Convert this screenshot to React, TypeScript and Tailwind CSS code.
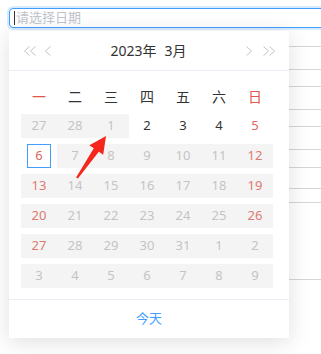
import type { ReactNode } from "react";

type Day = { n: number; off?: boolean; red?: boolean; picked?: boolean };

const WEEK = ["一", "二", "三", "四", "五", "六", "日"];

// 2023-03 grid, Monday first. off = greyed out, red = Mon/Sun of current month
const ROWS: Day[][] = [
  [{ n: 27, off: true }, { n: 28, off: true }, { n: 1, off: true }, { n: 2 }, { n: 3 }, { n: 4 }, { n: 5, red: true }],
  [{ n: 6, red: true, picked: true }, { n: 7, off: true }, { n: 8, off: true }, { n: 9, off: true }, { n: 10, off: true }, { n: 11, off: true }, { n: 12, off: true, red: true }],
  [{ n: 13, off: true, red: true }, { n: 14, off: true }, { n: 15, off: true }, { n: 16, off: true }, { n: 17, off: true }, { n: 18, off: true }, { n: 19, off: true, red: true }],
  [{ n: 20, off: true, red: true }, { n: 21, off: true }, { n: 22, off: true }, { n: 23, off: true }, { n: 24, off: true }, { n: 25, off: true }, { n: 26, off: true, red: true }],
  [{ n: 27, off: true, red: true }, { n: 28, off: true }, { n: 29, off: true }, { n: 30, off: true }, { n: 31, off: true }, { n: 1, off: true }, { n: 2, off: true }],
  [{ n: 3, off: true }, { n: 4, off: true }, { n: 5, off: true }, { n: 6, off: true }, { n: 7, off: true }, { n: 8, off: true }, { n: 9, off: true }],
];

function Chevron({ dir, double }: { dir: "l" | "r"; double?: boolean }) {
  const one = dir === "l" ? "5.5,0.5 0.5,5 5.5,9.5" : "0.5,0.5 5.5,5 0.5,9.5";
  const two = dir === "l" ? "11.5,0.5 6.5,5 11.5,9.5" : "6.5,0.5 11.5,5 6.5,9.5";
  return (
    <svg width={double ? 12 : 6} height="10" viewBox={double ? "0 0 12 10" : "0 0 6 10"} fill="none" stroke="#c0c4cc" strokeWidth="1">
      <polyline points={one} />
      {double && <polyline points={two} />}
    </svg>
  );
}

function Cell({ d }: { d: Day }) {
  let color = "text-[#333]";
  if (d.off) color = d.red ? "text-[#dc7a72]" : "text-[#c4c4c4]";
  else if (d.red) color = "text-[#dd665e]";
  let inner: ReactNode = d.n;
  if (d.picked) {
    inner = (
      <span className="w-6 h-6 flex items-center justify-center border border-[#409eff]">{d.n}</span>
    );
  }
  return (
    <div className={`w-9 h-6 flex items-center justify-center ${d.off ? "bg-[#f4f4f4]" : ""} ${color}`}>
      {inner}
    </div>
  );
}

export default function App() {
  return (
    <div
      className="relative w-[321px] h-[354px] overflow-hidden bg-white pt-2"
      style={{ fontFamily: '"Noto Sans", "Noto Sans CJK SC", sans-serif' }}
    >
      {/* date input */}
      <div className="ml-[9px] w-[330px] h-5 border border-[#409eff] rounded-sm shadow-[0_0_0_2px_rgba(64,158,255,0.2)] flex items-center pl-1 text-[13px] text-[#c0c4cc]">
        <span className="w-px h-[14px] bg-[#333] mr-px" />
        请选择日期
      </div>

      {/* form fields behind the popup */}
      <div className="ml-[9px] w-[330px] mt-[18px] flex flex-col">
        <div className="h-6 border-y border-[#d6d6d6]" />
        <div className="h-6 mt-4 border-y border-[#d6d6d6]" />
        <div className="h-6 mt-4 border-y border-[#d6d6d6]" />
        <div className="h-[22px] mt-[17px] border-y border-[#d6d6d6]" />
        <div className="h-[78px] mt-[13px] border-y border-[#d6d6d6]" />
      </div>

      {/* popup */}
      <div className="absolute left-[9px] top-[31px] w-[280px] bg-white shadow-[0_4px_22px_rgba(0,0,0,0.13)] text-[13px]">
        <div className="h-10 flex items-center border-b border-[#ebeef5] pl-[15px] pr-[14px]">
          <div className="flex items-center gap-[9px]">
            <Chevron dir="l" double />
            <Chevron dir="l" />
          </div>
          <div className="flex-1 text-center text-[#333] text-[14px]">
            2023年<span className="ml-2">3月</span>
          </div>
          <div className="flex items-center gap-[11px]">
            <Chevron dir="r" />
            <Chevron dir="r" double />
          </div>
        </div>

        <div className="pl-3 pt-[13px] pb-[11px] flex flex-col gap-[6px]">
          <div className="flex text-[14px]">
            {WEEK.map((w, i) => (
              <div
                key={w}
                className={`w-9 h-6 flex items-center justify-center ${i === 0 || i === 6 ? "text-[#e0574e]" : "text-[#333]"}`}
              >
                {w}
              </div>
            ))}
          </div>
          {ROWS.map((row, r) => (
            <div key={r} className="flex">
              {row.map((d, i) => (
                <Cell key={i} d={d} />
              ))}
            </div>
          ))}
        </div>

        <div className="h-[39px] border-t border-[#ebeef5] flex items-center justify-center text-[#409eff]">
          今天
        </div>
      </div>

      {/* annotation arrow */}
      <svg className="absolute left-[70px] top-[130px]" width="45" height="55" viewBox="0 0 45 55">
        <polygon
          fill="#f5271c"
          points="36,6 33.2,24.8 28.8,21.7 7.9,48.6 6.1,47.4 23.8,18.3 19.4,15.2"
        />
      </svg>
    </div>
  );
}
